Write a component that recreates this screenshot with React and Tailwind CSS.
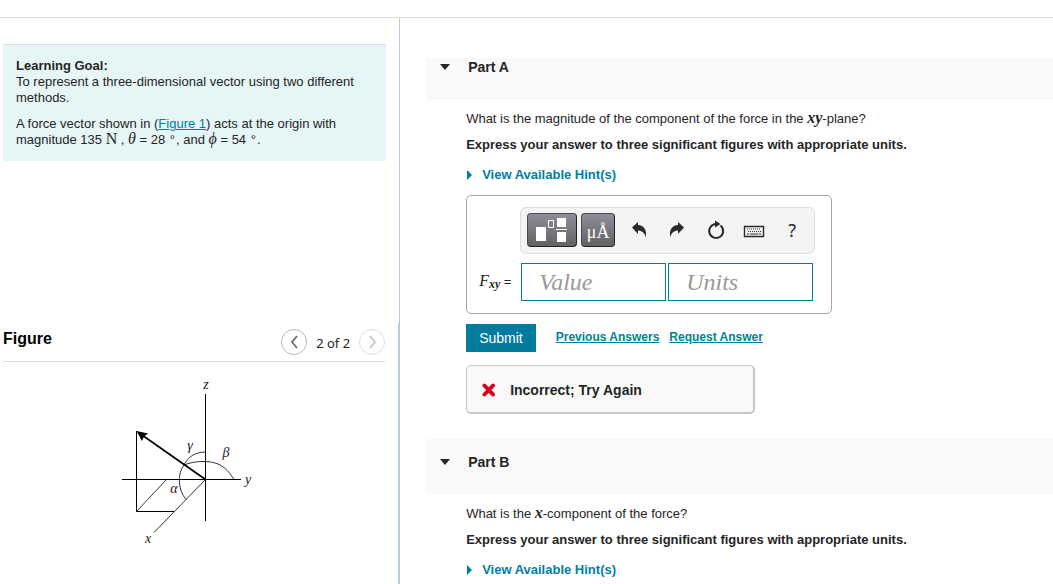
const link = 'text-[#007fa3] underline'

export default function App() {
  return (
    <div className="flex min-h-screen flex-col bg-white font-['Liberation_Sans',Arial,sans-serif] text-[13px] leading-4 text-[#252525]">
      <header className="h-[18px] border-b border-[#dddddd]" />
      <div className="flex flex-1">
        <aside className="flex w-[38%] shrink-0 flex-col border-r border-[#b8cade]">
          <LearningGoal />
          <FigurePanel />
        </aside>
        <main className="min-w-0 flex-1 pt-10 pl-[26px]">
          <Part title="Part A" headerClass="pt-px pb-[25px]">
            <p>
              What is the magnitude of the component of the force in the <MathVar bold>xy</MathVar>-plane?
            </p>
            <Instructions />
            <AnswerBox />
            <div className="mt-2.5 flex items-start">
              <button type="button" className="h-7 bg-[#047a9c] px-[13px] text-sm text-white">Submit</button>
              <div className="flex gap-2.5 pt-[5px] pl-5 text-xs leading-4 font-bold">
                <a href="#previous" className={link}>Previous Answers</a>
                <a href="#request" className={link}>Request Answer</a>
              </div>
            </div>
            <div className="mt-[13px] flex h-[49px] w-[289px] items-center gap-3.5 rounded-[5px] border border-r-2 border-b-2 border-[#c7c7c7] bg-[#f9f9f9] pt-px pl-3.5 text-sm font-bold">
              <svg width="15" height="14" viewBox="0 0 15 14" stroke="#db0020" strokeWidth="4" strokeLinecap="round"><path d="M3.500 2.500 12 11.500M12 2.500 3.500 11.500" /></svg>
              Incorrect; Try Again
            </div>
          </Part>
          <div className="h-[25px]" />
          <Part title="Part B" headerClass="pt-[15px] pb-[25px]">
            <p>
              What is the <MathVar bold>x</MathVar>-component of the force?
            </p>
            <Instructions />
          </Part>
        </main>
      </div>
    </div>
  )
}

function LearningGoal() {
  return (
    <section className="mt-[26px] mr-[13px] mb-auto ml-[3px] border-t border-[#dddddd] bg-[#e6f5f6] p-[13px]">
      <h2 className="font-bold">Learning Goal:</h2>
      <p>To represent a three-dimensional vector using two different methods.</p>
      <p className="mt-2.5">
        A force vector shown in (<a href="#figure" className={link}>Figure 1</a>) acts at the origin with
        magnitude 135 <span className="font-['Liberation_Serif',serif] text-base leading-3">N</span> ,{' '}
        <MathVar>θ</MathVar> = 28 <Degree />, and <MathVar>ϕ</MathVar> = 54 <Degree />.
      </p>
    </section>
  )
}

function FigurePanel() {
  return (
    <section id="figure" className="border-r border-[#b8cade] pr-[13px] pb-6 pl-[3px]">
      <div className="flex items-start border-b border-[#dddddd] py-1.5">
        <h2 className="flex-1 text-base leading-5 font-bold text-black">Figure</h2>
        <div className="flex items-center gap-[9px]">
          <PagerButton label="Previous figure" d="M9 1 4 7l5 6" />
          <span className="pt-0.5 font-['Noto_Sans',sans-serif] text-[13px]">2 of 2</span>
          <PagerButton label="Next figure" d="M4 1l5 6-5 6" disabled />
        </div>
      </div>
      <VectorDiagram />
    </section>
  )
}

function PagerButton({ label, d, disabled }) {
  return (
    <button
      type="button"
      aria-label={label}
      disabled={disabled}
      className="flex size-[26px] items-center justify-center rounded-full border border-[#b8b8b8] text-[#6b6b6b] disabled:border-[#dedede] disabled:text-[#c4c4c4]"
    >
      <svg width="12" height="14" viewBox="0 0 12 14" fill="none" stroke="currentColor" strokeWidth="1.8"><path d={d} /></svg>
    </button>
  )
}

function VectorDiagram() {
  return (
    <svg className="mt-2 ml-[97px]" width="170" height="190" viewBox="0 0 170 190" fill="none" stroke="#000">
      {/* axes */}
      <path d="M105.5 24v127M22 109.5h119" />
      <path d="M105.5 109.5 54 162.5" strokeWidth="0.8" />
      {/* projection onto the xy-plane */}
      <path d="M36.5 61v80.500H74" />
      <path d="M36.5 141.5 66 110" strokeWidth="0.8" />
      {/* force */}
      <path d="M105.5 109.5 42 65" strokeWidth="1.7" />
      <path d="M36.5 61 48 63.500l-4 3-2 4.500z" fill="#000" stroke="none" />
      {/* angles */}
      <path d="M84 95C88 87 95 82 105.5 82M84 95c10-4 24-5 34-1 7 3 12 9 16 15.500M84 95c-7 9-6 25 2 34.500" strokeWidth="0.8" />
      <g fill="#222" stroke="none" fontFamily="Liberation Serif, serif" fontStyle="italic" fontSize="14" textAnchor="middle">
        <text x="106" y="19">z</text>
        <text x="90" y="80">γ</text>
        <text x="126" y="87">β</text>
        <text x="74" y="123">α</text>
        <text x="148" y="114">y</text>
        <text x="48" y="173">x</text>
      </g>
    </svg>
  )
}

function Part({ title, headerClass, children }) {
  return (
    <section>
      <h2 className={`bg-[#f9f9f9] pl-3.5 ${headerClass}`}>
        <button type="button" className="flex items-center gap-[18px] text-sm leading-4 font-bold">
          <svg width="10" height="6" viewBox="0 0 10 6" fill="currentColor"><path d="M0 0h10L5 6z" /></svg>
          {title}
        </button>
      </h2>
      <div className="pt-[11px] pl-10">{children}</div>
    </section>
  )
}

function Instructions() {
  return (
    <>
      <p className="mt-2.5 font-bold">Express your answer to three significant figures with appropriate units.</p>
      <button type="button" className="mt-3.5 flex items-center gap-2.5 pl-px font-bold text-[#007fa3]">
        <svg width="5" height="10" viewBox="0 0 5 10" fill="currentColor"><path d="M0 0v10l5-5z" /></svg>
        View Available Hint(s)
      </button>
    </>
  )
}

function AnswerBox() {
  return (
    <div className="mt-3 flex w-[366px] items-end rounded-[5px] border border-[#a6a6a6] pt-[11px] pr-4 pb-3 pl-3">
      <label htmlFor="value" className="flex h-[38px] w-[41px] shrink-0 items-center whitespace-nowrap">
        <span>
          <MathVar>F</MathVar><sub><MathVar small>xy</MathVar></sub> =
        </span>
      </label>
      <div className="flex-1">
        <div className="flex h-[47px] items-start gap-1 rounded-md border border-[#dddddd] bg-[#f4f4f4] px-1.5 pt-[5px]">
          <TemplateButton label="Templates" className="w-[50px] pr-px">
            <svg width="32" height="26" viewBox="0 0 32 26" fill="#fff">
              <path d="M0 10h10v14H0zM21 1h9v9h-9zM21 15h9v10h-9zM20 12h11v1H20z" />
              <path d="M12.5 3.5h5v7h-5z" fill="none" stroke="#fff" />
            </svg>
          </TemplateButton>
          <TemplateButton label="Symbols" className="w-[34px]">
            <span className="pt-1 font-['Liberation_Serif',serif] text-lg leading-none">μÅ</span>
          </TemplateButton>
          <div className="flex h-[34px] flex-1 items-center justify-between pr-1.5 pl-2.5 text-[#2b2b2b]">
            <ToolButton label="Undo"><path d="M1 5.500 7 0v3c6 .5 9.500 5 7.500 12.500C14 11.500 12 9 7 8.500V12z" fill="currentColor" /></ToolButton>
            <ToolButton label="Redo"><path d="M15 5.500 9 0v3c-6 .5-9.500 5-7.500 12.500C2 11.500 4 9 9 8.500V12z" fill="currentColor" /></ToolButton>
            <ToolButton label="Reset">
              <path d="M12.500 3.500A7 7 0 1 1 8 2" fill="none" stroke="currentColor" strokeWidth="2" />
              <path d="M7-1.500v7l5.500-3.500z" fill="currentColor" />
            </ToolButton>
            <ToolButton label="Keyboard">
              <path d="M-1.5 4.500h19v10h-19z" fill="none" stroke="currentColor" strokeWidth="1.4" />
              <path d="M1 7h14M2 9.500h13" stroke="currentColor" strokeWidth="1.2" strokeDasharray="1 1" />
              <path d="M1 12h2M4 12h8M13 12h2" stroke="currentColor" strokeWidth="1.2" />
            </ToolButton>
            <button type="button" aria-label="Help" className="w-5 font-['Noto_Sans',sans-serif] text-lg leading-5">?</button>
          </div>
        </div>
        <div className="mt-[9px] flex gap-0.5 pr-0.5 pl-px">
          <Field id="value" placeholder="Value" />
          <Field id="units" placeholder="Units" />
        </div>
      </div>
    </div>
  )
}

function TemplateButton({ label, className, children }) {
  return (
    <button
      type="button"
      aria-label={label}
      className={`flex h-[34px] items-center justify-center rounded border border-[#4a4a4c] border-r-[#222222] border-b-[#222222] bg-linear-to-b from-[#8e8e98] to-[#626264] text-white ${className}`}
    >
      {children}
    </button>
  )
}

function ToolButton({ label, children }) {
  return (
    <button type="button" aria-label={label} className="flex w-5 justify-center">
      <svg className="overflow-visible" width="16" height="16" viewBox="0 0 16 16">{children}</svg>
    </button>
  )
}

function Field({ id, placeholder }) {
  return (
    <input
      id={id}
      aria-label={placeholder}
      placeholder={placeholder}
      className="h-[38px] w-0 flex-1 border border-[#047a9c] bg-white px-[17px] font-['Liberation_Serif',serif] text-2xl italic placeholder:text-[#999999]"
    />
  )
}

function Degree() {
  return <span className="px-px">°</span>
}

function MathVar({ bold, small, children }) {
  const size = small ? 'text-xs' : 'text-base'
  return (
    <i className={`font-['Liberation_Serif',serif] leading-3 ${size} ${bold || small ? 'font-bold' : ''}`}>{children}</i>
  )
}
